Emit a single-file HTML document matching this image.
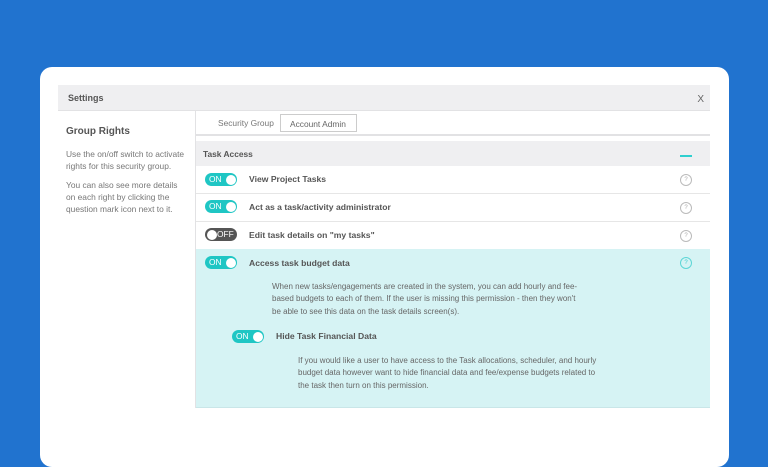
<!DOCTYPE html>
<html><head><meta charset="utf-8"><style>
*{box-sizing:border-box;margin:0;padding:0}
body{width:768px;height:440px;background:#2173cf;font-family:"Liberation Sans",Arial,sans-serif;position:relative;overflow:hidden;color:#555}
.card{position:absolute;left:40px;top:67px;width:689px;height:400px;background:#fff;border-radius:12px}
.hdr{position:absolute;left:58px;top:85px;width:652px;height:26px;background:#efeff1;border-bottom:1px solid #e2e2e4}
.hdr .t{position:absolute;left:10px;top:8px;font-size:9px;font-weight:bold;color:#555}
.hdr .x{position:absolute;right:6px;top:9px;font-size:10px;color:#666}
.left{position:absolute;left:58px;top:111px;width:138px;height:297px;border-right:1px solid #e2e2e4}
.left h3{position:absolute;left:8px;top:15px;font-size:10px;color:#555}
.left p{position:absolute;left:8px;font-size:8.4px;line-height:12px;color:#777;white-space:nowrap}
.sg{position:absolute;left:196px;top:111px;width:514px;height:25px;border-bottom:2px solid #e2e2e4}
.sg span{position:absolute;left:22px;top:7px;font-size:8.4px;color:#777}
.sg .in{position:absolute;left:84px;top:3px;width:77px;height:18px;border:1px solid #ccc;font-size:8.4px;color:#666;padding:4px 0 0 9px}
.ta{position:absolute;left:196px;top:141px;width:514px;height:25px;background:#efeff1}
.ta span{position:absolute;left:7px;top:8px;font-size:8.4px;font-weight:bold;color:#555}
.ta i{position:absolute;right:18px;top:14px;width:12px;height:1.5px;background:#2fcfcf}
.row{position:absolute;left:196px;width:514px;height:28px;border-bottom:1px solid #e6e6e6}
.row b{position:absolute;left:53px;top:8px;font-size:8.6px;color:#555}
.tg{position:absolute;width:32px;height:13px;border-radius:7px;background:#1fc6c4;color:#fff;font-size:8.4px}
.tg span{position:absolute;left:4px;top:1px}
.tg:after{content:"";position:absolute;right:1.5px;top:1.5px;width:10px;height:10px;border-radius:50%;background:#fff}
.tg.off{background:#555}
.tg.off span{left:12px}
.tg.off:after{left:1.5px;right:auto}
.q{position:absolute;right:18px;width:12px;height:12px;border:1px solid #bbb;border-radius:50%;font-size:6px;color:#aaa;text-align:center;line-height:10px}
.teal{position:absolute;left:196px;top:249px;width:514px;height:159px;background:#d6f3f4;border-bottom:1px solid #c9e6e8}
.desc{position:absolute;font-size:8px;line-height:12.3px;color:#666}
</style></head><body>
<div class="card"></div>
<div class="hdr"><div class="t">Settings</div><div class="x">X</div></div>
<div class="left"><h3>Group Rights</h3>
<p style="top:37px">Use the on/off switch to activate<br>rights for this security group.</p>
<p style="top:68px">You can also see more details<br>on each right by clicking the<br>question mark icon next to it.</p></div>
<div class="sg"><span>Security Group</span><div class="in">Account Admin</div></div>
<div class="ta"><span>Task Access</span><i></i></div>
<div class="row" style="top:166px"><div class="tg" style="left:9px;top:7px"><span>ON</span></div><b>View Project Tasks</b><div class="q" style="top:8px">?</div></div>
<div class="row" style="top:194px"><div class="tg" style="left:9px;top:6px"><span>ON</span></div><b>Act as a task/activity administrator</b><div class="q" style="top:8px">?</div></div>
<div class="row" style="top:222px"><div class="tg off" style="left:9px;top:6px"><span>OFF</span></div><b>Edit task details on "my tasks"</b><div class="q" style="top:8px">?</div></div>
<div class="teal">
<div class="tg" style="left:9px;top:7px"><span>ON</span></div>
<b style="position:absolute;left:53px;top:9px;font-size:8.6px;color:#555">Access task budget data</b>
<div class="q" style="top:8px;border-color:#5dd6d6;color:#3cc">?</div>
<div class="desc" style="left:76px;top:32px;width:312px">When new tasks/engagements are created in the system, you can add hourly and fee-based budgets to each of them. If the user is missing this permission - then they won't be able to see this data on the task details screen(s).</div>
<div class="tg" style="left:36px;top:81px"><span>ON</span></div>
<b style="position:absolute;left:80px;top:82px;font-size:8.6px;color:#555">Hide Task Financial Data</b>
<div class="desc" style="left:102px;top:106px;width:305px">If you would like a user to have access to the Task allocations, scheduler, and hourly budget data however want to hide financial data and fee/expense budgets related to the task then turn on this permission.</div>
</div>
</body></html>
